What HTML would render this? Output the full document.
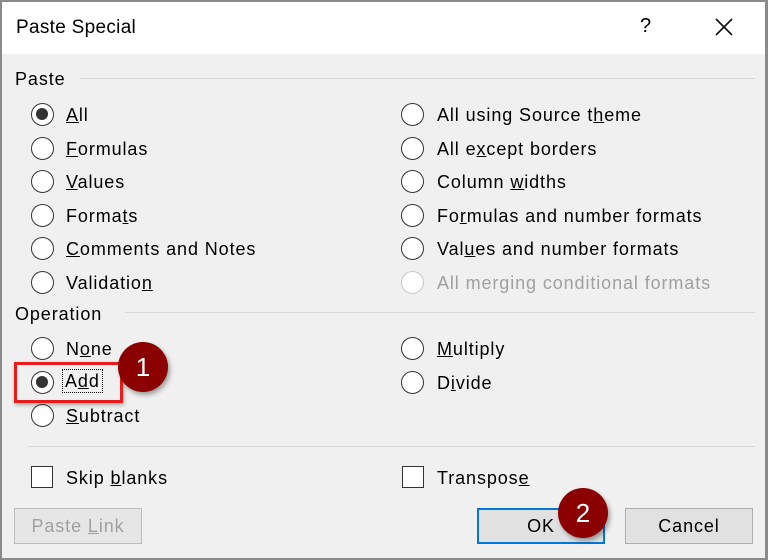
<!DOCTYPE html>
<html><head><style>
*{margin:0;padding:0;box-sizing:border-box}
body{width:768px;height:560px;overflow:hidden;background:#f0f0f0;font-family:"Liberation Sans",sans-serif;font-size:18px;color:#000;position:relative}
.frame{position:absolute;left:0;top:0;width:768px;height:560px;border:2px solid #8a8a8a;border-right-width:3px}
.title{position:absolute;left:2px;top:2px;width:763px;height:52px;background:#fff}
.t{position:absolute;white-space:nowrap;line-height:20px;letter-spacing:0.9px}
.r{position:absolute;width:23px;height:23px;border:1.5px solid #333;border-radius:50%;background:#fff}
.r.on::after{content:"";position:absolute;left:4px;top:4px;width:12px;height:12px;border-radius:50%;background:#333}
.r.dis{border-color:#c8c8c8}
.line{position:absolute;height:1px;background:#d8d8d8}
.cb{position:absolute;width:22px;height:22px;border:1.5px solid #333;background:#fff}
.btn{position:absolute;height:36px;width:128px;background:#e1e1e1;border:1px solid #adadad;text-align:center;line-height:34px;letter-spacing:0.9px}
.badge{position:absolute;width:50px;height:50px;border-radius:50%;background:#8b0000;color:#fff;text-align:center;line-height:50px;font-size:26px;box-shadow:2px 3px 5px rgba(0,0,0,.35)}
u{text-decoration:underline}
</style></head><body>
<div class="title"></div>
<div class="t" style="left:16px;top:18px;font-size:19px;letter-spacing:0.3px">Paste Special</div>
<div class="t" style="left:640px;top:16px;font-size:20px">?</div>
<svg style="position:absolute;left:714px;top:17px" width="20" height="20"><path d="M2 2L18 18M18 2L2 18" stroke="#111" stroke-width="1.6"/></svg>

<div class="t" style="left:15px;top:69px">Paste</div>
<div class="line" style="left:80px;top:78px;width:675px"></div>

<div class="r on" style="left:31px;top:103px"></div><div class="t" style="left:66px;top:105px"><u>A</u>ll</div>
<div class="r" style="left:31px;top:137px"></div><div class="t" style="left:66px;top:139px"><u>F</u>ormulas</div>
<div class="r" style="left:31px;top:170px"></div><div class="t" style="left:66px;top:172px"><u>V</u>alues</div>
<div class="r" style="left:31px;top:204px"></div><div class="t" style="left:66px;top:206px">Forma<u>t</u>s</div>
<div class="r" style="left:31px;top:237px"></div><div class="t" style="left:66px;top:239px"><u>C</u>omments and Notes</div>
<div class="r" style="left:31px;top:271px"></div><div class="t" style="left:66px;top:273px">Validatio<u>n</u></div>

<div class="r" style="left:401px;top:103px"></div><div class="t" style="left:437px;top:105px">All using Source t<u>h</u>eme</div>
<div class="r" style="left:401px;top:137px"></div><div class="t" style="left:437px;top:139px">All e<u>x</u>cept borders</div>
<div class="r" style="left:401px;top:170px"></div><div class="t" style="left:437px;top:172px">Column <u>w</u>idths</div>
<div class="r" style="left:401px;top:204px"></div><div class="t" style="left:437px;top:206px">Fo<u>r</u>mulas and number formats</div>
<div class="r" style="left:401px;top:237px"></div><div class="t" style="left:437px;top:239px">Val<u>u</u>es and number formats</div>
<div class="r dis" style="left:401px;top:271px"></div><div class="t" style="left:437px;top:273px;color:#a0a0a0">All merging conditional formats</div>

<div class="t" style="left:15px;top:304px">Operation</div>
<div class="line" style="left:125px;top:312px;width:630px"></div>

<div class="r" style="left:31px;top:337px"></div><div class="t" style="left:66px;top:339px">N<u>o</u>ne</div>
<div class="r on" style="left:31px;top:371px"></div><div class="t" style="left:62px;top:369px;border:1px dotted #000;padding:1px 2px">A<u>d</u>d</div>
<div class="r" style="left:31px;top:404px"></div><div class="t" style="left:66px;top:406px"><u>S</u>ubtract</div>
<div class="r" style="left:401px;top:337px"></div><div class="t" style="left:437px;top:339px"><u>M</u>ultiply</div>
<div class="r" style="left:401px;top:371px"></div><div class="t" style="left:437px;top:373px">D<u>i</u>vide</div>
<div style="position:absolute;left:14px;top:362px;width:109px;height:41px;border:3px solid #e81c1c;box-shadow:1px 2px 4px rgba(0,0,0,.3)"></div>
<div class="badge" style="left:118px;top:342px">1</div>

<div class="line" style="left:28px;top:446px;width:727px"></div>
<div class="cb" style="left:31px;top:466px"></div><div class="t" style="left:66px;top:468px">Skip <u>b</u>lanks</div>
<div class="cb" style="left:402px;top:466px"></div><div class="t" style="left:437px;top:468px">Transpos<u>e</u></div>

<div class="btn" style="left:14px;top:508px;color:#a0a0a0;background:#e6e6e6;border-color:#bdbdbd">Paste <u>L</u>ink</div>
<div class="btn" style="left:477px;top:508px;border:2px solid #0078d7;line-height:32px">OK</div>
<div class="btn" style="left:625px;top:508px">Cancel</div>
<div class="badge" style="left:558px;top:488px">2</div>
<div class="frame"></div>
</body></html>
